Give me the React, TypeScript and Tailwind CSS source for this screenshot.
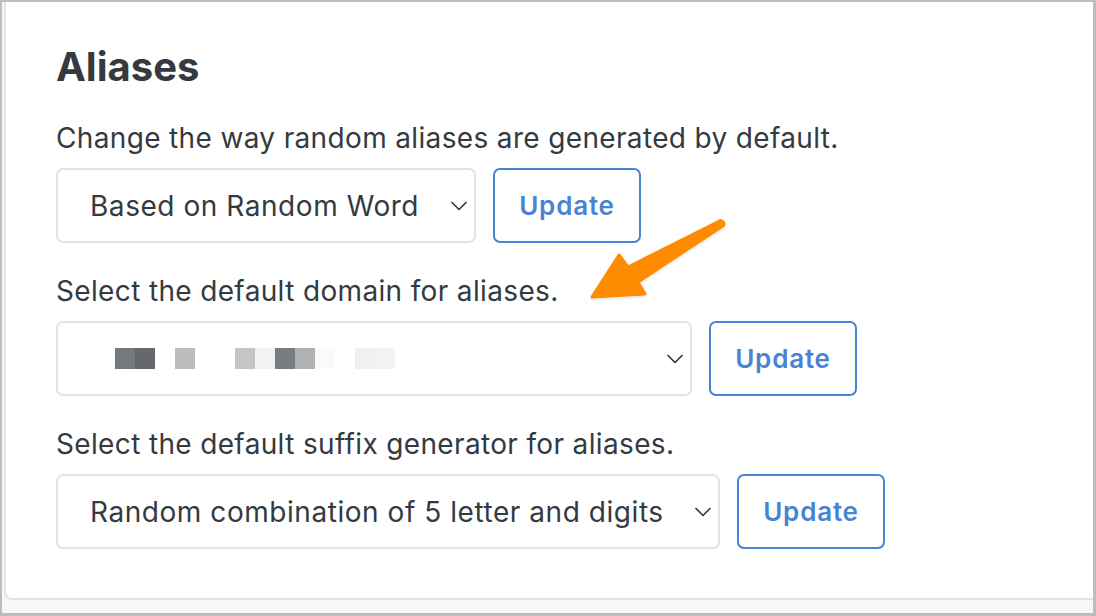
import React from "react";

const font = { fontFamily: "Inter, 'Noto Sans', sans-serif" };

function Chevron() {
  return (
    <svg width="16" height="10" viewBox="0 0 16 10" className="shrink-0">
      <polyline points="1,1.5 8,8.5 15,1.5" fill="none" stroke="#343a40" strokeWidth="1.7" strokeLinecap="round" strokeLinejoin="round" />
    </svg>
  );
}

function UpdateButton() {
  return (
    <button className="w-[148px] h-[75px] border-2 border-[#4a82d4] rounded-[7px] text-[#4a82d4] text-[26px] font-semibold tracking-[0.8px] bg-white">
      Update
    </button>
  );
}

const cells: (string | null)[] = [
  "#76797c", "#67686c", null, "#bcbdbe", null, null, "#c4c5c6", "#f2f2f2", "#7a7d80", "#b0b1b2", "#fafafa", null, "#f0f0f0", "#f3f3f3",
];

function Group({ label, width, children }: { label: string; width: string; children: React.ReactNode }) {
  return (
    <div className="flex flex-col">
      <div className="h-[36px] leading-[36px] text-[28px] tracking-[0.35px] text-[#343a40] whitespace-nowrap">{label}</div>
      <div className="mt-[12px] flex gap-[17px]">
        <div className={`${width} h-[75px] border-2 border-[#dfe4ec] rounded-[7px] bg-white flex items-center justify-between pl-[32px] pr-[7px]`}>
          {children}
          <Chevron />
        </div>
        <UpdateButton />
      </div>
    </div>
  );
}

export default function App() {
  return (
    <div style={font} className="relative w-[1096px] h-[616px] overflow-hidden bg-[#f6f7f9] border-t-2 border-l-2 border-r-[3px] border-b-[3px] border-[#bdbdbd] pl-[2px] box-border">
      <div className="bg-white border-l-2 border-b-2 border-[#dfe4ec] rounded-bl-[8px] pl-[50px] pt-[40px] pb-[49px] -mr-[10px]">
        <h1 className="text-[40px] leading-[50px] font-bold text-[#343a40]">Aliases</h1>
        <div className="mt-[28px] flex flex-col gap-[30px]">
          <Group label="Change the way random aliases are generated by default." width="w-[420px]">
            <span className="text-[28px] tracking-[0.55px] text-[#343a40] whitespace-nowrap">Based on Random Word</span>
          </Group>
          <Group label="Select the default domain for aliases." width="w-[636px]">
            <div className="flex ml-[25px]">
              {cells.map((c, i) => (
                <div key={i} className="w-[20px] h-[21px]" style={{ backgroundColor: c ?? "transparent" }} />
              ))}
            </div>
          </Group>
          <Group label="Select the default suffix generator for aliases." width="w-[664px]">
            <span className="text-[28px] tracking-[0.55px] text-[#343a40] whitespace-nowrap">Random combination of 5 letter and digits</span>
          </Group>
        </div>
      </div>
      <svg className="absolute left-0 top-0 pointer-events-none" width="1096" height="616" viewBox="0 0 1096 616">
        <defs>
          <filter id="sh" x="-20%" y="-20%" width="140%" height="140%">
            <feDropShadow dx="0" dy="1" stdDeviation="1.5" floodColor="#000" floodOpacity="0.15" />
          </filter>
        </defs>
        <path
          d="M718.5,218.5 L626,265 L617,253 L590,295 L643,292 L636,280 L721.5,223.5 Q723,219.5 718.5,218.5 Z"
          fill="#ff8c00"
          stroke="#ff8c00"
          strokeWidth="3"
          strokeLinejoin="round"
          filter="url(#sh)"
        />
      </svg>
    </div>
  );
}
